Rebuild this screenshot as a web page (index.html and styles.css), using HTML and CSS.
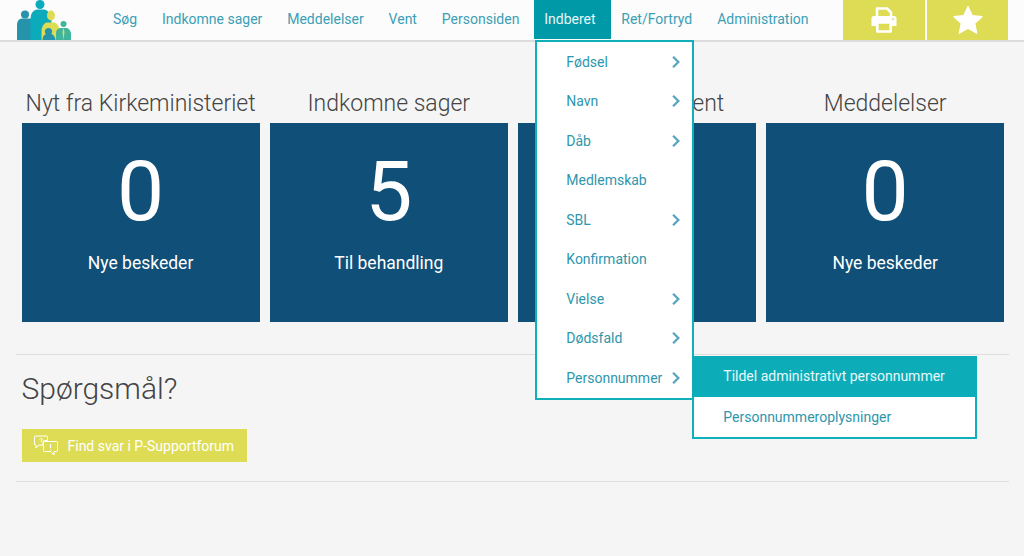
FILE: index.html
```html
<!DOCTYPE html>
<html lang="da">
<head>
<meta charset="utf-8">
<title>Personregistrering</title>
<link rel="stylesheet" href="styles.css">
</head>
<body>
<header class="topbar">
  <a class="logo" href="#" aria-label="Logo">
    <svg width="56" height="40" viewBox="0 0 56 40">
      <circle cx="9" cy="14.500" r="4" fill="#2593ab"/>
      <path d="M1 40V25q0-6 5-6.500h8q4 .5 5 6V40z" fill="#2593ab"/>
      <circle cx="24" cy="4.500" r="4.500" fill="#0cabbb"/>
      <path d="M14.500 40V19q0-8 6-9.500h8q5 1 7 9V40z" fill="#0cabbb"/>
      <ellipse cx="35" cy="15.500" rx="4" ry="5" fill="#dedc55"/>
      <path d="M25.500 40V30q1-6 5-7.500h8q4 1.500 5.500 7.500V40z" fill="#dedc55"/>
      <circle cx="32.500" cy="31.500" r="3.600" fill="#2593ab"/>
      <path d="M26.500 40q0-5 4-6h5q3 1 4 6z" fill="#2593ab"/>
      <circle cx="47.500" cy="24" r="3" fill="#41b59c"/>
      <path d="M40 40V33q0-4 4-5h7q3 1 4 5v7z" fill="#41b59c"/>
      <path d="M47.500 28l-1 4 1 8 1-8z" fill="#dedc55"/>
    </svg>
  </a>
  <nav class="mainnav">
    <a href="#">Søg</a>
    <a href="#">Indkomne sager</a>
    <a href="#">Meddelelser</a>
    <a href="#">Vent</a>
    <a href="#">Personsiden</a>
    <div class="navitem">
      <a class="active" href="#">Indberet</a>
      <ul class="menu">
        <li><a href="#">Fødsel<svg class="chev" viewBox="0 0 8 12"><path d="M1.500 1.500L6 6l-4.500 4.500"/></svg></a></li>
        <li><a href="#">Navn<svg class="chev" viewBox="0 0 8 12"><path d="M1.500 1.500L6 6l-4.500 4.500"/></svg></a></li>
        <li><a href="#">Dåb<svg class="chev" viewBox="0 0 8 12"><path d="M1.500 1.500L6 6l-4.500 4.500"/></svg></a></li>
        <li><a href="#">Medlemskab</a></li>
        <li><a href="#">SBL<svg class="chev" viewBox="0 0 8 12"><path d="M1.500 1.500L6 6l-4.500 4.500"/></svg></a></li>
        <li><a href="#">Konfirmation</a></li>
        <li><a href="#">Vielse<svg class="chev" viewBox="0 0 8 12"><path d="M1.500 1.500L6 6l-4.500 4.500"/></svg></a></li>
        <li><a href="#">Dødsfald<svg class="chev" viewBox="0 0 8 12"><path d="M1.500 1.500L6 6l-4.500 4.500"/></svg></a></li>
        <li class="has-sub"><a href="#">Personnummer<svg class="chev" viewBox="0 0 8 12"><path d="M1.500 1.500L6 6l-4.500 4.500"/></svg></a>
          <ul class="submenu">
            <li><a class="sub-active" href="#">Tildel administrativt personnummer</a></li>
            <li><a href="#">Personnummeroplysninger</a></li>
          </ul>
        </li>
      </ul>
    </div>
    <a href="#">Ret/Fortryd</a>
    <a href="#">Administration</a>
  </nav>
  <div class="tools">
    <a class="tool" href="#" aria-label="Udskriv">
      <svg width="30" height="30" viewBox="0 0 30 30">
        <path d="M8 11V3.500h10l4 4V11" fill="none" stroke="#fff" stroke-width="2.600" stroke-linejoin="round"/>
        <path d="M5 11h20a2.500 2.500 0 0 1 2.500 2.500V21H22v-3H8v3H2.500v-7.500A2.500 2.500 0 0 1 5 11z" fill="#fff"/>
        <path d="M8.300 17.500h13.400v9H8.300z" fill="none" stroke="#fff" stroke-width="2.600" stroke-linejoin="round"/>
        <circle cx="24" cy="14" r="1" fill="#dedc55"/>
      </svg>
    </a>
    <a class="tool" href="#" aria-label="Favoritter">
      <svg width="32" height="32" viewBox="0 0 32 32">
        <path d="M16 2.500l4.200 9 9.800 1.200-7.200 6.700 1.900 9.700L16 24.300l-8.700 4.800 1.900-9.700L2 12.700l9.800-1.200z" fill="#fff" stroke="#fff" stroke-width="1.200" stroke-linejoin="round"/>
      </svg>
    </a>
  </div>
</header>
<main class="content">
  <section class="cards">
    <article class="card-col">
      <h2>Nyt fra Kirkeministeriet</h2>
      <div class="card"><span class="num">0</span><span class="lbl">Nye beskeder</span></div>
    </article>
    <article class="card-col">
      <h2>Indkomne sager</h2>
      <div class="card"><span class="num">5</span><span class="lbl">Til behandling</span></div>
    </article>
    <article class="card-col">
      <h2>Sager sat på vent</h2>
      <div class="card"><span class="num">0</span><span class="lbl">I vent</span></div>
    </article>
    <article class="card-col">
      <h2>Meddelelser</h2>
      <div class="card"><span class="num">0</span><span class="lbl">Nye beskeder</span></div>
    </article>
  </section>
  <section class="faq">
    <h1>Spørgsmål?</h1>
    <a class="forum" href="#">
      <svg width="26" height="22" viewBox="0 0 26 22" fill="none" stroke="#fff" stroke-width="1" stroke-linejoin="round">
        <path d="M2.500 1h11a1 1 0 0 1 1 1v3.500h-3a1.500 1.500 0 0 0-1.500 1.500v3H6l-3 3v-3H2.500a1 1 0 0 1-1-1V2a1 1 0 0 1 1-1z"/>
        <path d="M11.500 6.500h12a1 1 0 0 1 1 1v8a1 1 0 0 1-1 1H21v3.500l-3.500-3.500h-6a1 1 0 0 1-1-1V7.500a1 1 0 0 1 1-1z"/>
        <path d="M17.500 9v4M17.500 14.500v1"/>
        <path d="M6.500 4.500q1-1.500 2.500-.8 1 1-.8 2.300v1"/>
      </svg>
      <span>Find svar i P-Supportforum</span>
    </a>
  </section>
</main>
</body>
</html>
```
FILE: styles.css
```css
* { box-sizing: border-box; }
html, body { margin: 0; padding: 0; }
body {
  width: 1024px;
  height: 556px;
  overflow: hidden;
  background: #f5f5f5;
  font-family: Roboto, "Liberation Sans", sans-serif;
  color: #444;
}
a { text-decoration: none; color: inherit; }
ul { list-style: none; margin: 0; padding: 0; }

.topbar {
  display: flex;
  height: 42px;
  background: #fcfcfc;
  border-bottom: 2px solid #dcdcdc;
  position: relative;
  padding-left: 16px;
}
.logo { display: block; width: 56px; height: 40px; }
.logo svg { display: block; }

.mainnav {
  display: flex;
  height: 40px;
  margin-left: 31px;
  font-size: 14px;
  color: #3b9fb5;
}
.mainnav > a, .navitem > a {
  display: block;
  padding: 0 14.900px 0 10px;
  line-height: 39px;
  white-space: nowrap;
}
.navitem { position: relative; }
.navitem > a.active {
  width: 77px;
  padding-right: 0;
  background: #0099a8;
  color: #e8f6f7;
}

.menu {
  position: absolute;
  top: 40px;
  left: 1px;
  width: 159px;
  height: 360px;
  background: #fff;
  border: 2px solid #10b0bb;
  z-index: 5;
  color: #2f96ac;
  font-size: 14px;
}
.menu > li { position: relative; height: 39.500px; }
.menu > li > a {
  display: flex;
  align-items: center;
  justify-content: space-between;
  height: 39.500px;
  padding: 0 11px 0 29px;
  white-space: nowrap;
}
.chev {
  width: 10px;
  height: 14px;
  fill: none;
  stroke: #57a5c0;
  stroke-width: 2;
}
.submenu {
  position: absolute;
  left: 155px;
  top: -2.500px;
  width: 285px;
  height: 83px;
  background: #fff;
  border: 2px solid #10b0bb;
  border-top: 0;
}
.submenu a {
  display: block;
  height: 40px;
  line-height: 40px;
  padding-left: 29px;
  white-space: nowrap;
}
.submenu a.sub-active {
  height: 41px;
  background: #0cadb9;
  color: #e9f8f9;
  margin: 0 -2px;
  padding-left: 31px;
}

.tools {
  display: flex;
  gap: 2px;
  margin-left: auto;
  margin-right: 16px;
  height: 40px;
}
.tool {
  display: flex;
  align-items: center;
  justify-content: center;
  width: 82px;
  height: 40px;
  background: #dedc55;
}
.tool + .tool { width: 81px; }

.content { padding: 0 15px 0 16px; }
.cards {
  display: flex;
  gap: 10px;
  padding: 0 0 32px 5.500px;
  border-bottom: 1px solid #dedede;
}
.card-col { width: 238.200px; }
.card-col h2 {
  margin: 48px 0 0;
  height: 33px;
  font-size: 23px;
  line-height: 28px;
  font-weight: 300;
  text-align: center;
  color: #444;
  white-space: nowrap;
}
.card {
  display: flex;
  flex-direction: column;
  align-items: center;
  height: 199px;
  background: #0f4f78;
  color: #fff;
}
.num {
  margin-top: 24px;
  font-size: 84px;
  line-height: 90px;
  font-weight: 400;
}
.lbl {
  margin-top: 11px;
  font-size: 17.500px;
  line-height: 30px;
}

.faq {
  padding: 0 0 19px 5.500px;
  border-bottom: 1px solid #dedede;
}
.faq h1 {
  margin: 15px 0 22px;
  font-size: 30px;
  line-height: 37px;
  font-weight: 300;
  color: #444;
}
.forum {
  display: flex;
  align-items: center;
  gap: 9px;
  width: 225px;
  height: 33px;
  padding-left: 11px;
  background: #dedc55;
  color: #fff;
  font-size: 14px;
}
```
